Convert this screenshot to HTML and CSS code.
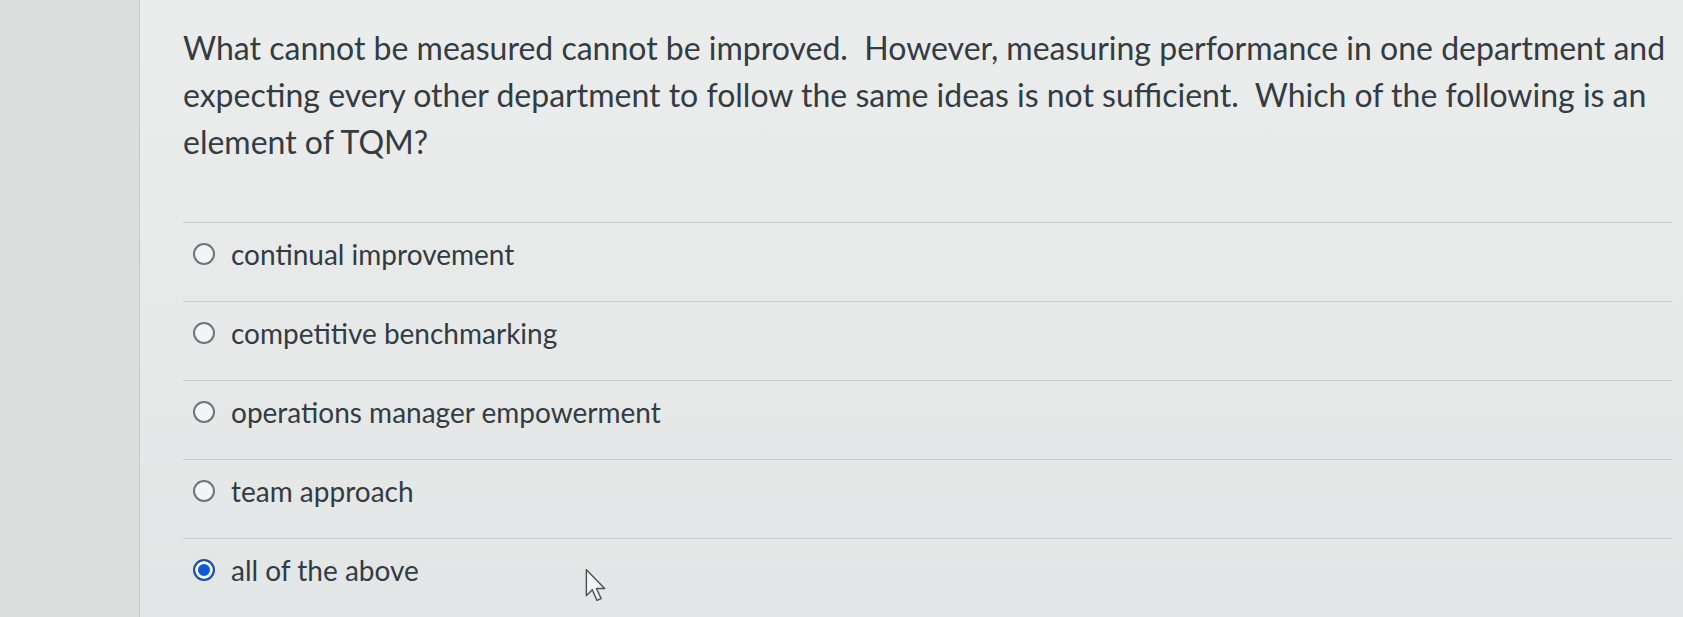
FILE: index.html
```html
<!DOCTYPE html>
<html lang="en">
<head>
<meta charset="utf-8">
<title>Quiz question</title>
<link rel="stylesheet" href="styles.css">
</head>
<body>
<div class="page">
  <aside class="side"></aside>
  <main class="main">
    <div class="question">What cannot be measured cannot be improved.&nbsp; However, measuring performance in one department and expecting every other department to follow the same ideas is not sufficient.&nbsp; Which of the following is an element of TQM?</div>
    <ul class="answers">
      <li class="answer"><span class="radio"></span><span class="label">continual improvement</span></li>
      <li class="answer"><span class="radio"></span><span class="label">competitive benchmarking</span></li>
      <li class="answer"><span class="radio"></span><span class="label">operations manager empowerment</span></li>
      <li class="answer"><span class="radio"></span><span class="label">team approach</span></li>
      <li class="answer"><span class="radio checked"></span><span class="label">all of the above</span></li>
    </ul>
  </main>
</div>
<svg class="cursor" width="26" height="36" viewBox="0 0 22 30" aria-hidden="true">
  <path d="M2 2 L2 24 L7 19 L11 28 L14.5 26.5 L10.5 18 L17.5 18 Z" fill="#f4f6f6" stroke="#4a5055" stroke-width="1.2" stroke-linejoin="round"/>
</svg>
</body>
</html>
```
FILE: styles.css
```css
html, body {
  margin: 0;
  padding: 0;
  height: 100%;
}
body {
  background: #e6e8e8;
  font-family: Lato, "Open Sans", "Liberation Sans", sans-serif;
  color: #333b43;
  overflow: hidden;
  position: relative;
}
.page {
  display: flex;
  min-height: 617px;
}
.side {
  width: 139px;
  flex: none;
  background: #dcdedd;
  border-right: 1px solid #c6c9ca;
}
.main {
  flex: 1;
  padding: 24px 11px 0 43px;
  background: linear-gradient(180deg, #ebecec 0%, #e7e9e9 60%, #e3e6e6 100%);
}
.question {
  font-size: 32px;
  line-height: 47px;
  margin: 0 0 57px 0;
}
.answers {
  list-style: none;
  margin: 0;
  padding: 0;
}
.answer {
  display: flex;
  align-items: center;
  gap: 16px;
  border-top: 1px solid #c9cdce;
  padding: 13px 0 29px 10px;
  font-size: 28px;
  line-height: 36px;
}
.radio {
  width: 18px;
  height: 18px;
  border: 2px solid #6f7478;
  border-radius: 50%;
  background: #f3f4f4;
  flex: none;
  box-sizing: content-box;
}
.radio.checked {
  border-color: #1e4fa8;
  background: #0c5ad8;
  box-shadow: inset 0 0 0 3px #f3f4f4;
}
.cursor {
  position: absolute;
  left: 584px;
  top: 567px;
}
```
